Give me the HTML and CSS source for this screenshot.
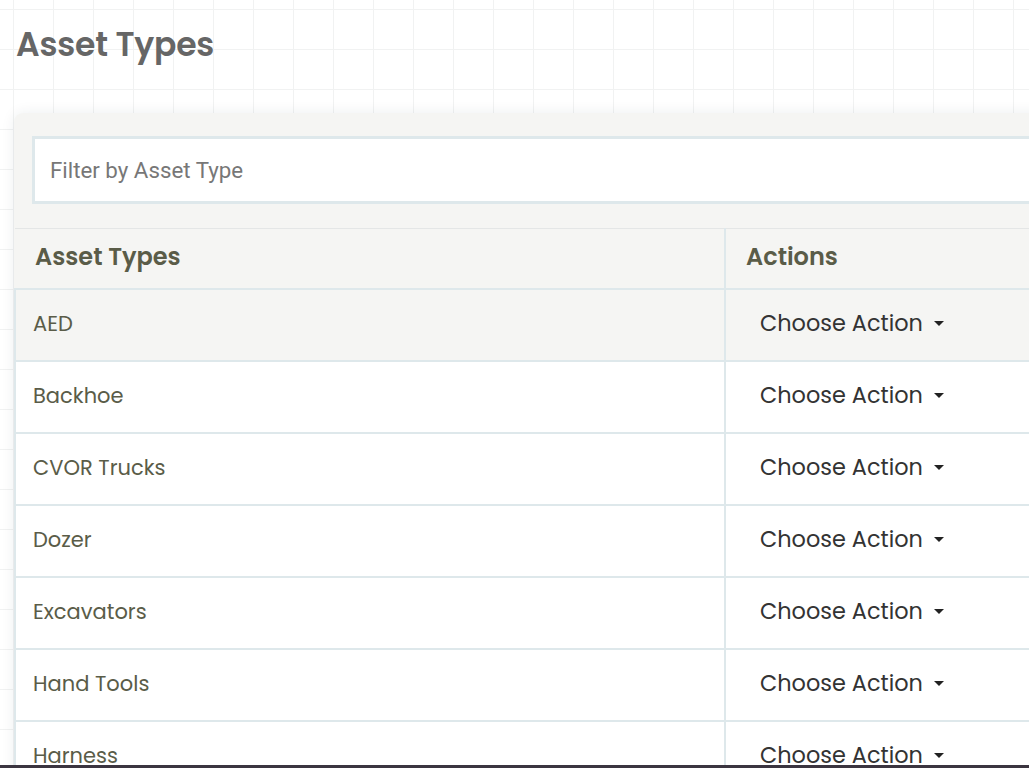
FILE: index.html
```html
<!DOCTYPE html>
<html lang="en">
<head>
  <meta charset="UTF-8">
  <meta name="viewport" content="width=device-width, initial-scale=1.0">
  <title>Asset Types</title>
  <link rel="stylesheet" href="styles.css">
</head>
<body>
  <div class="page">
    <h1 class="page-title">Asset Types</h1>

    <div class="card">
      <div class="filter">
        <input type="text" class="filter-input" placeholder="Filter by Asset Type">
      </div>

      <table class="asset-table">
        <thead>
          <tr>
            <th class="col-name">Asset Types</th>
            <th class="col-actions">Actions</th>
          </tr>
        </thead>
        <tbody>
          <tr class="active">
            <td>AED</td>
            <td><button class="action-btn">Choose Action <span class="caret"></span></button></td>
          </tr>
          <tr>
            <td>Backhoe</td>
            <td><button class="action-btn">Choose Action <span class="caret"></span></button></td>
          </tr>
          <tr>
            <td>CVOR Trucks</td>
            <td><button class="action-btn">Choose Action <span class="caret"></span></button></td>
          </tr>
          <tr>
            <td>Dozer</td>
            <td><button class="action-btn">Choose Action <span class="caret"></span></button></td>
          </tr>
          <tr>
            <td>Excavators</td>
            <td><button class="action-btn">Choose Action <span class="caret"></span></button></td>
          </tr>
          <tr>
            <td>Hand Tools</td>
            <td><button class="action-btn">Choose Action <span class="caret"></span></button></td>
          </tr>
          <tr>
            <td>Harness</td>
            <td><button class="action-btn">Choose Action <span class="caret"></span></button></td>
          </tr>
          <tr>
            <td>Ladders</td>
            <td><button class="action-btn">Choose Action <span class="caret"></span></button></td>
          </tr>
        </tbody>
      </table>
    </div>
  </div>

  <div class="bottom-bar"></div>
</body>
</html>
```

FILE: styles.css
```css
/* General Styles */
html, body {
  height: 100%;
}

body {
  margin: 0;
  overflow: hidden;
  font-family: "Poppins", "Inter", "Noto Sans", sans-serif;
  background-color: #fff;
  background-image:
    linear-gradient(to right, #f1f2f2 1px, transparent 1px),
    linear-gradient(to bottom, #f1f2f2 1px, transparent 1px);
  background-size: 40px 40px;
  background-position: 13px 9px;
}

.page {
  width: 1120px;
  padding: 0 0 0 14px;
}

.page-title {
  margin: 0;
  padding: 20px 0 0 2px;
  height: 113px;
  box-sizing: border-box;
  font-size: 33px;
  line-height: 1.5;
  font-weight: 600;
  letter-spacing: -0.2px;
  color: #666;
}

/* Card */
.card {
  background: #f5f5f3;
  border-radius: 9px 0 0 0;
  box-shadow: 0 0 14px rgba(30, 50, 60, 0.08);
  padding-top: 23px;
}

.filter {
  padding: 0 0 24px 18px;
}

.filter-input {
  display: block;
  width: 100%;
  height: 68px;
  box-sizing: border-box;
  padding: 0 15px;
  border: 3px solid #dee8eb;
  background: #fff;
  font-family: Roboto, sans-serif;
  font-size: 22.3px;
  color: #333;
  outline: none;
}

.filter-input::placeholder {
  color: #777;
}

/* Table */
.asset-table {
  width: 100%;
  border-collapse: collapse;
}

.asset-table th {
  height: 55px;
  padding: 0 20px 4px;
  text-align: left;
  font-size: 24px;
  font-weight: 600;
  color: #5a5c48;
  border-top: 1px solid #e4e6e6;
  border-bottom: 2px solid #dee8eb;
}

.asset-table th.col-name {
  width: 669px;
}

.asset-table th.col-actions {
  border-left: 2px solid #dee8eb;
}

.asset-table td {
  height: 66px;
  padding: 0 18px 4px 17px;
  background: #fff;
  font-size: 21px;
  color: #5a5c48;
  border-bottom: 2px solid #dee8eb;
}

.asset-table td:first-child {
  border-left: 2px solid #dee8eb;
}

.asset-table td + td {
  border-left: 2px solid #dee8eb;
  padding-left: 34px;
}

.asset-table tr.active td {
  background: #f5f5f3;
}

.action-btn {
  display: inline-flex;
  align-items: center;
  padding: 0;
  border: none;
  background: none;
  font-family: inherit;
  font-size: 22.4px;
  color: #333;
  cursor: pointer;
}

.caret {
  display: inline-block;
  margin-left: 11px;
  border-left: 5px solid transparent;
  border-right: 5px solid transparent;
  border-top: 5px solid #222;
}

.bottom-bar {
  position: fixed;
  left: 0;
  right: 0;
  bottom: 0;
  height: 3px;
  background: #3b3540;
}
```
